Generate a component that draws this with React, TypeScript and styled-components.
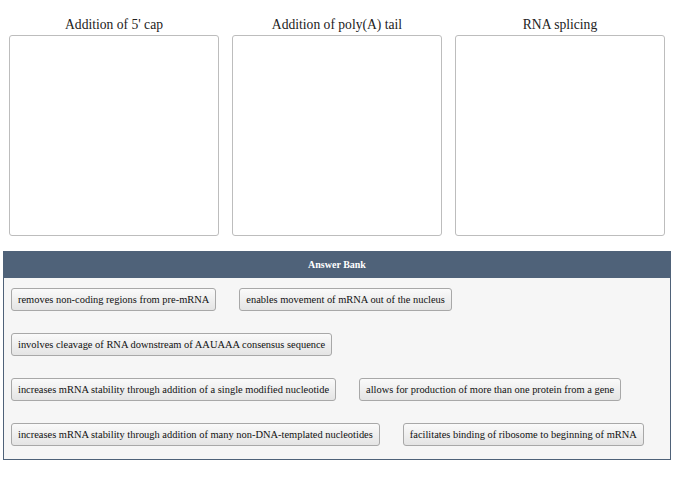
import React from 'react';
import styled, { createGlobalStyle } from 'styled-components';

const GlobalStyle = createGlobalStyle`
  body {
    margin: 0;
    background: #ffffff;
    font-family: "Liberation Serif", "Times New Roman", serif;
  }
`;

const Page = styled.div`
  width: 668px;
  padding: 0 3px;
`;

const Targets = styled.div`
  display: grid;
  grid-template-columns: repeat(3, 1fr);
  column-gap: 13px;
  padding: 15px 6px 0;
`;

const Column = styled.div`
  display: flex;
  flex-direction: column;
`;

const ColumnTitle = styled.div`
  font-size: 13.6px;
  line-height: 19px;
  color: #222;
  text-align: center;
  margin-bottom: 1px;
`;

const DropZone = styled.div`
  height: 199px;
  border: 1px solid #bdbdbd;
  border-radius: 3px;
  background: #fff;
`;

const Bank = styled.div`
  margin-top: 15px;
  border: 1px solid #4f6279;
  border-top: none;
  background: #f6f6f6;
`;

const BankHeader = styled.div`
  height: 27px;
  background: #4f6279;
  color: #fff;
  font-size: 10px;
  font-weight: bold;
  display: flex;
  align-items: center;
  justify-content: center;
`;

const BankItems = styled.div`
  display: flex;
  flex-wrap: wrap;
  column-gap: 23px;
  row-gap: 22px;
  padding: 10px 7px 13px;
`;

const Chip = styled.button`
  height: 23px;
  padding: 0 6px;
  font: 10.45px "Liberation Serif", "Times New Roman", serif;
  color: #111;
  border: 1px solid #a8a8a8;
  border-radius: 3px;
  background: linear-gradient(#fafafa, #e4e4e4);
  white-space: nowrap;
`;

const columns = ["Addition of 5' cap", 'Addition of poly(A) tail', 'RNA splicing'];

const answers = [
  'removes non-coding regions from pre-mRNA',
  'enables movement of mRNA out of the nucleus',
  'involves cleavage of RNA downstream of AAUAAA consensus sequence',
  'increases mRNA stability through addition of a single modified nucleotide',
  'allows for production of more than one protein from a gene',
  'increases mRNA stability through addition of many non-DNA-templated nucleotides',
  'facilitates binding of ribosome to beginning of mRNA',
];

const App: React.FC = () => (
  <Page>
    <GlobalStyle />
    <Targets>
      {columns.map(title => (
        <Column key={title}>
          <ColumnTitle>{title}</ColumnTitle>
          <DropZone />
        </Column>
      ))}
    </Targets>
    <Bank>
      <BankHeader>Answer Bank</BankHeader>
      <BankItems>
        {answers.map(text => (
          <Chip key={text}>{text}</Chip>
        ))}
      </BankItems>
    </Bank>
  </Page>
);

export default App;
